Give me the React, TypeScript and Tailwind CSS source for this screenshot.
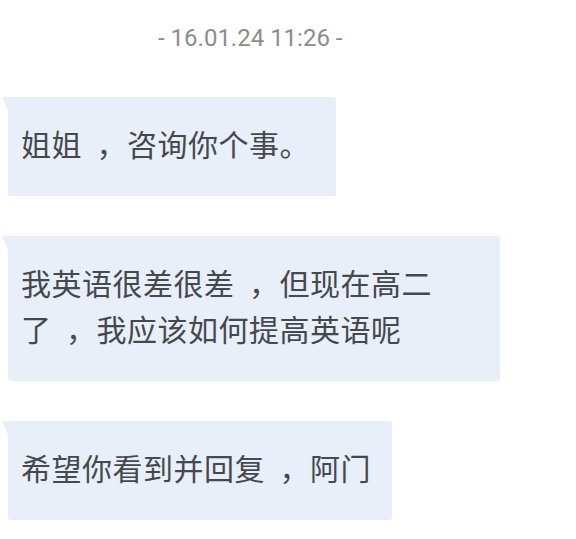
const messages = [
  { id: 1, width: 'w-[328px]', lines: ['姐姐  ，咨询你个事。'] },
  { id: 2, width: 'w-[492px]', lines: ['我英语很差很差  ，但现在高二', '了  ，我应该如何提高英语呢'] },
  { id: 3, width: 'w-[384px]', lines: ['希望你看到并回复  ，阿门'] },
]

const Bubble = ({ width, lines }: { width: string; lines: string[] }) => (
  <div className={`relative ${width} ml-[8px] rounded-r-[3px] rounded-bl-[3px] bg-[#e8eff9] pl-[13px] pt-[23px] pb-[30px]`}>
    <span className="absolute left-[-6px] top-0 h-0 w-0 border-t-[14px] border-l-[6px] border-t-[#e8eff9] border-l-transparent" />
    {lines.map((line, i) => (
      <div key={i} className="text-[30px] leading-[46px] tracking-[0.5px] text-[#45484d] whitespace-pre">
        {line}
      </div>
    ))}
  </div>
)

export default function App() {
  return (
    <div
      className="h-[539px] w-[576px] overflow-hidden bg-white"
      style={{ fontFamily: '"Noto Sans CJK SC", "Noto Sans", sans-serif' }}
    >
      <div className="pt-[24px] pl-[158px] text-[24px] leading-[28px] text-[#8c8c8c] font-['Roboto',sans-serif]">
        - 16.01.24 11:26 -
      </div>
      <div className="mt-[45px] flex flex-col gap-[40px]">
        {messages.map((m) => (
          <Bubble key={m.id} width={m.width} lines={m.lines} />
        ))}
      </div>
    </div>
  )
}
